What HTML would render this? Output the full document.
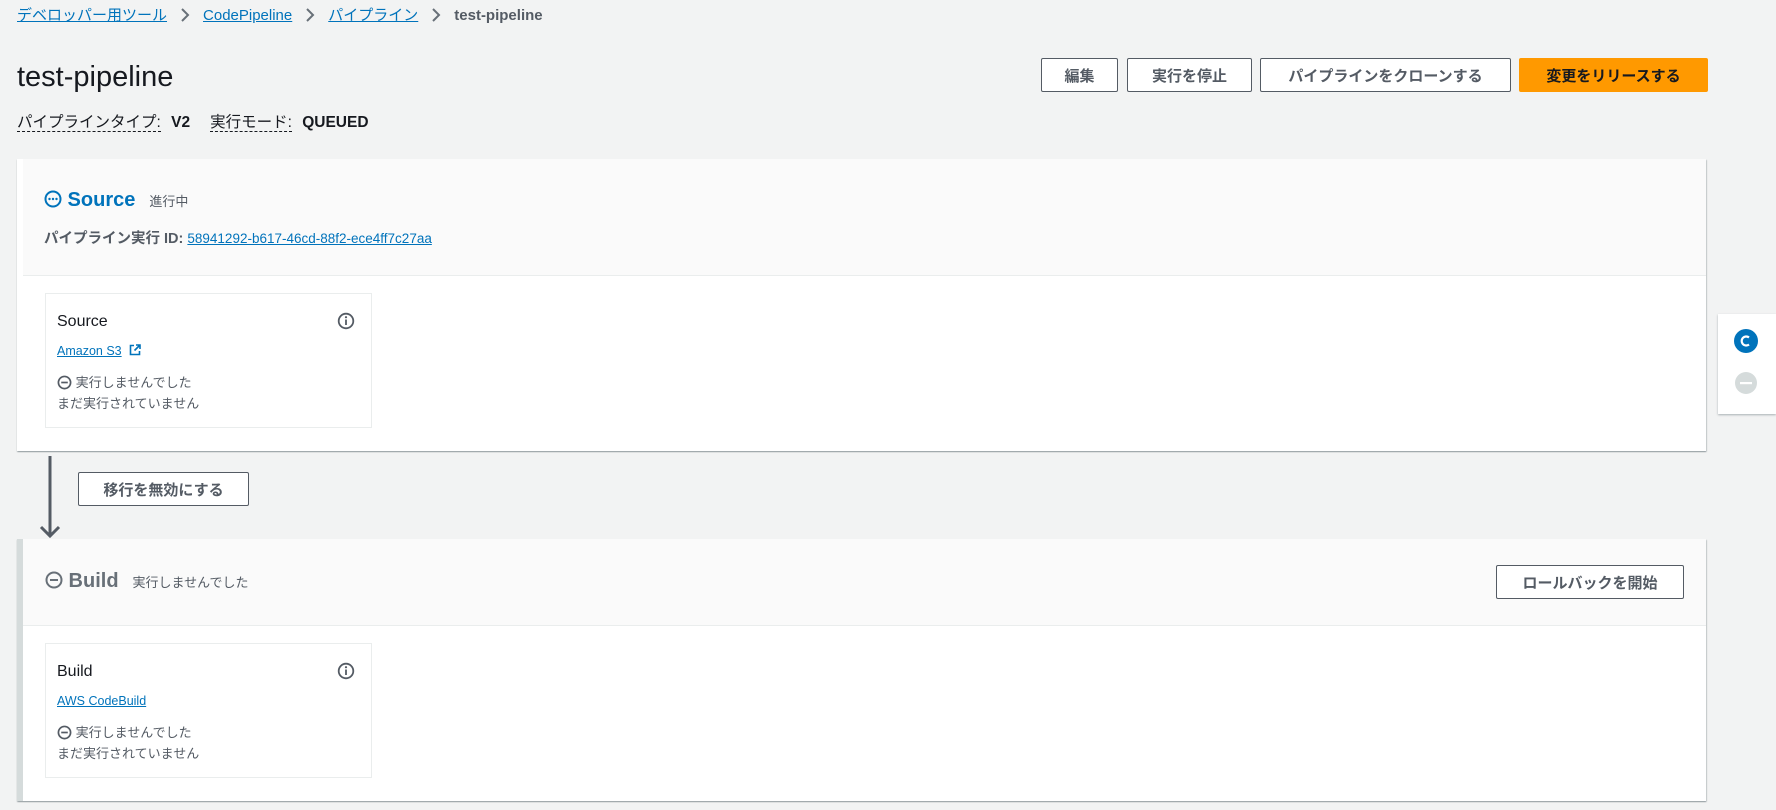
<!DOCTYPE html>
<html><head><meta charset="utf-8"><style>
*{box-sizing:border-box;margin:0;padding:0}
body{width:1776px;height:810px;overflow:hidden;background:#f2f3f3;font-family:"Liberation Sans","Noto Sans CJK JP",sans-serif;color:#16191f;position:relative}
.a{position:absolute}
a{color:#0073bb;text-decoration:underline}
.bc{top:6px;left:17px;font-size:15px;white-space:nowrap;line-height:20px}
.bc .s{display:inline-block;vertical-align:middle;margin:-3px 13px 0}
.btn{position:absolute;border:1px solid #545b64;border-radius:2px;background:#fff;color:#545b64;font-weight:bold;font-size:15px;display:flex;align-items:center;justify-content:center;white-space:nowrap}
.panel{position:absolute;left:17px;width:1689px;background:#fff;box-shadow:0 1px 1px rgba(0,28,36,.3),1px 1px 1px rgba(0,28,36,.15)}
.hd{position:absolute;left:6px;right:0;top:0;background:#fafafa;border-bottom:1px solid #eaeded}
.card{position:absolute;left:28px;width:327px;height:135px;border:1px solid #eaeded;background:#fff}
.card .t{position:absolute;left:11px;top:19px;font-size:16px}
.card .i{position:absolute;right:16px;top:18px}
.card .l{position:absolute;left:11px;top:50px;font-size:12.5px;white-space:nowrap}
.card .st{position:absolute;left:11px;top:78px;font-size:13px;color:#545b64;line-height:21px;white-space:nowrap}
.ic{display:inline-block;vertical-align:middle}
</style></head><body>
<div class="a bc"><a>デベロッパー用ツール</a><svg class="s" width="10" height="14" viewBox="0 0 10 14"><path d="M2 1l6 6-6 6" fill="none" stroke="#687078" stroke-width="2"/></svg><a>CodePipeline</a><svg class="s" width="10" height="14" viewBox="0 0 10 14"><path d="M2 1l6 6-6 6" fill="none" stroke="#687078" stroke-width="2"/></svg><a>パイプライン</a><svg class="s" width="10" height="14" viewBox="0 0 10 14"><path d="M2 1l6 6-6 6" fill="none" stroke="#687078" stroke-width="2"/></svg><b style="color:#545b64">test-pipeline</b></div>
<div class="a" style="left:17px;top:59px;font-size:29px;line-height:36px">test-pipeline</div>
<div class="a" style="left:17px;top:110px;font-size:15.5px;white-space:nowrap"><span style="border-bottom:1px dashed #16191f">パイプラインタイプ:</span> <b style="margin-left:6px">V2</b><span style="border-bottom:1px dashed #16191f;margin-left:20px">実行モード:</span> <b style="margin-left:6px">QUEUED</b></div>
<div class="btn" style="left:1041px;top:58px;width:77px;height:34px">編集</div>
<div class="btn" style="left:1127px;top:58px;width:125px;height:34px">実行を停止</div>
<div class="btn" style="left:1260px;top:58px;width:251px;height:34px">パイプラインをクローンする</div>
<div class="btn" style="left:1519px;top:58px;width:189px;height:34px;background:#ff9900;border-color:#ff9900;color:#16191f">変更をリリースする</div>

<div class="panel" style="top:159px;height:292px">
 <div class="hd" style="height:117px"></div>
 <div class="a" style="left:27px;top:28px;font-size:20px;font-weight:bold;color:#0073bb;white-space:nowrap;line-height:26px"><svg class="ic" width="18" height="18" viewBox="0 0 18 18" style="margin-top:-4px"><circle cx="9" cy="9" r="7.5" fill="none" stroke="#0073bb" stroke-width="2"/><circle cx="5.5" cy="9" r="1.2" fill="#0073bb"/><circle cx="9" cy="9" r="1.2" fill="#0073bb"/><circle cx="12.5" cy="9" r="1.2" fill="#0073bb"/></svg> Source<span style="font-size:13px;font-weight:normal;color:#545b64;margin-left:14px">進行中</span></div>
 <div class="a" style="left:27px;top:68px;font-size:14.5px;font-weight:bold;color:#545b64;white-space:nowrap">パイプライン実行 ID: <a style="font-weight:normal;font-size:13.5px">58941292-b617-46cd-88f2-ece4ff7c27aa</a></div>
 <div class="card" style="top:134px">
  <div class="t">Source</div>
  <svg class="i" width="18" height="18" viewBox="0 0 18 18"><circle cx="9" cy="9" r="7.3" fill="none" stroke="#545b64" stroke-width="1.8"/><rect x="8.1" y="7.5" width="1.8" height="5.5" fill="#545b64"/><circle cx="9" cy="5.2" r="1.1" fill="#545b64"/></svg>
  <div class="l"><a>Amazon S3</a> <svg class="ic" width="12" height="12" viewBox="0 0 12 12" style="margin-left:4px;margin-top:-3px"><path d="M5 1.5H1.5v9h9V7" fill="none" stroke="#0073bb" stroke-width="1.6"/><path d="M7 1H11V5M11 1L5.5 6.5" fill="none" stroke="#0073bb" stroke-width="1.6"/></svg></div>
  <div class="st"><svg class="ic" width="15" height="15" viewBox="0 0 16 16" style="margin-top:-3px"><circle cx="8" cy="8" r="6.5" fill="none" stroke="#545b64" stroke-width="1.8"/><rect x="4.5" y="7.1" width="7" height="1.8" fill="#545b64"/></svg> 実行しませんでした<br>まだ実行されていません</div>
 </div>
</div>

<svg class="a" style="left:38px;top:456px" width="24" height="84" viewBox="0 0 24 84"><path d="M12 0V80M3 71l9 9 9-9" fill="none" stroke="#545b64" stroke-width="3"/></svg>
<div class="btn" style="left:78px;top:472px;width:171px;height:34px">移行を無効にする</div>

<div class="panel" style="top:539px;height:262px;border-left:6px solid #d5dbdb">
 <div class="hd" style="height:87px;left:0"></div>
 <div class="a" style="left:22px;top:29px;font-size:20px;font-weight:bold;color:#687078;white-space:nowrap;line-height:26px"><svg class="ic" width="18" height="18" viewBox="0 0 18 18" style="margin-top:-4px"><circle cx="9" cy="9" r="7.5" fill="none" stroke="#687078" stroke-width="2"/><rect x="5" y="8" width="8" height="2" fill="#687078"/></svg> Build<span style="font-size:13px;font-weight:normal;color:#545b64;margin-left:14px">実行しませんでした</span></div>
 <div class="btn" style="left:1473px;top:26px;width:188px;height:34px">ロールバックを開始</div>
 <div class="card" style="top:104px;left:22px">
  <div class="t">Build</div>
  <svg class="i" width="18" height="18" viewBox="0 0 18 18"><circle cx="9" cy="9" r="7.3" fill="none" stroke="#545b64" stroke-width="1.8"/><rect x="8.1" y="7.5" width="1.8" height="5.5" fill="#545b64"/><circle cx="9" cy="5.2" r="1.1" fill="#545b64"/></svg>
  <div class="l"><a>AWS CodeBuild</a></div>
  <div class="st"><svg class="ic" width="15" height="15" viewBox="0 0 16 16" style="margin-top:-3px"><circle cx="8" cy="8" r="6.5" fill="none" stroke="#545b64" stroke-width="1.8"/><rect x="4.5" y="7.1" width="7" height="1.8" fill="#545b64"/></svg> 実行しませんでした<br>まだ実行されていません</div>
 </div>
</div>

<div class="a" style="left:1718px;top:314px;width:58px;height:100px;background:#fff;box-shadow:0 1px 2px rgba(0,28,36,.3)">
 <svg class="a" style="left:16px;top:15px" width="24" height="24" viewBox="0 0 24 24"><circle cx="12" cy="12" r="12" fill="#0073bb"/><path d="M15 8.5A4.5 4.5 0 1 0 15 15.5" fill="none" stroke="#fff" stroke-width="2.2"/></svg>
 <svg class="a" style="left:16px;top:57px" width="24" height="24" viewBox="0 0 24 24"><circle cx="12" cy="12" r="11" fill="#d5dbdb"/><rect x="6" y="11" width="12" height="2.2" fill="#fff"/></svg>
</div>
</body></html>
